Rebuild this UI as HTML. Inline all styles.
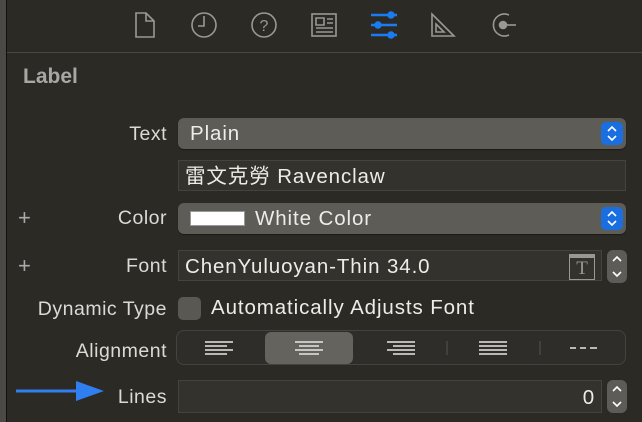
<!DOCTYPE html>
<html><head><meta charset="utf-8"><style>
*{margin:0;padding:0;box-sizing:border-box}
body{width:642px;height:422px;background:#2c2a25;position:relative;overflow:hidden;font-family:"Liberation Sans","Noto Sans CJK TC",sans-serif;color:#e2e0dc}
.abs{position:absolute}
.lbl{position:absolute;right:475px;font-size:19.5px;letter-spacing:0.5px;color:#dcdad6;text-align:right;white-space:nowrap;line-height:24px}
.pop{position:absolute;left:178px;width:448px;height:31px;background:#5e5c57;border-radius:6px;box-shadow:0 1px 1px rgba(0,0,0,.4)}
.pop span,.fld span{position:absolute;left:12px;top:0;line-height:31px;font-size:20.5px;letter-spacing:0.9px;color:#eeece8;white-space:nowrap}
.blue{position:absolute;right:3px;top:4px;width:22px;height:23px;background:#1a6fe0;border-radius:5px}
.fld{position:absolute;left:178px;background:#34322d;border:1px solid #45433e;height:31px}
.fld span{left:6px}
.step{position:absolute;left:607px;width:20px;height:33px;background:#5e5c57;border-radius:6px}
.plus{position:absolute;left:18px;font-size:22px;color:#aaa;font-weight:300}
</style></head><body>
<div class="abs" style="left:0;top:0;width:6px;height:422px;background:#4b4945"></div>
<div class="abs" style="left:6px;top:0;width:1px;height:422px;background:#111"></div>
<div class="abs" style="left:7px;top:52px;width:635px;height:1px;background:#4a4843"></div>
<svg class="abs" style="left:0;top:0" width="642" height="52" fill="none" stroke="#9a9893" stroke-width="1.6">
<path d="M136 13h10l8 8v16h-18z M146 13v8h8"/>
<circle cx="204" cy="25" r="12"/><path d="M204 16v10h-6"/>
<circle cx="264" cy="25" r="12"/><text x="264" y="31" font-size="16" fill="#9a9893" stroke="none" text-anchor="middle" font-family="Liberation Sans">?</text>
<rect x="312" y="14" width="24" height="22"/><path d="M316 18h8v7h-8z M327 19h6 M327 23h6 M316 28h17 M316 32h17"/>
<g stroke="#1a7cf5" stroke-width="2.4"><path d="M371 15h26 M371 25h26 M371 35h26"/><circle cx="391" cy="15" r="2.5" fill="#1a7cf5"/><circle cx="378" cy="25" r="2.5" fill="#1a7cf5"/><circle cx="391" cy="35" r="2.5" fill="#1a7cf5"/></g>
<path d="M432 14v22h22z M436 24v8h8z"/>
<path d="M509 15a11 11 0 1 0 0 20"/><circle cx="503" cy="25" r="3.5" fill="#9a9893"/><path d="M503 25h13"/>
</svg>
<div class="abs" style="left:23px;top:65px;font-size:21px;font-weight:bold;color:#a9a7a3">Label</div>

<div class="lbl" style="top:122px">Text</div>
<div class="pop" style="top:118px"><span>Plain</span><div class="blue"><svg width="22" height="23" fill="none" stroke="#fff" stroke-width="1.6"><path d="M7 9l4-4 4 4 M7 14l4 4 4-4"/></svg></div></div>
<div class="fld" style="top:160px;width:448px"><span>雷文克勞 Ravenclaw</span></div>

<div class="plus" style="top:205px">+</div>
<div class="lbl" style="top:206px">Color</div>
<div class="pop" style="top:203px"><div class="abs" style="left:12px;top:8px;width:55px;height:15px;background:#fff;border:1px solid #999"></div><span style="left:77px">White Color</span><div class="blue"><svg width="22" height="23" fill="none" stroke="#fff" stroke-width="1.6"><path d="M7 9l4-4 4 4 M7 14l4 4 4-4"/></svg></div></div>

<div class="plus" style="top:253px">+</div>
<div class="lbl" style="top:254px">Font</div>
<div class="fld" style="top:250px;width:424px"><span>ChenYuluoyan-Thin 34.0</span>
<div class="abs" style="left:390px;top:3px;width:26px;height:26px;border:1px solid #9a9893;border-top-width:4px;color:#9a9893;font-family:'Liberation Serif';font-size:19px;text-align:center;line-height:22px">T</div></div>
<div class="step" style="top:250px"><svg width="20" height="33" fill="none" stroke="#fff" stroke-width="1.6"><path d="M6 11l4-4 4 4 M6 22l4 4 4-4"/></svg></div>

<div class="lbl" style="top:297px">Dynamic Type</div>
<div class="abs" style="left:178px;top:297px;width:23px;height:23px;background:#5a5853;border-radius:5px"></div>
<div class="abs" style="left:211px;top:296px;font-size:20.5px;letter-spacing:0.9px;color:#eeece8;line-height:24px">Automatically Adjusts Font</div>

<div class="lbl" style="top:339px">Alignment</div>
<div class="abs" style="left:176px;top:330px;width:450px;height:35px;border:1px solid #45433e;border-radius:8px;background:#2f2d29"></div>
<div class="abs" style="left:265px;top:332px;width:88px;height:32px;background:#65635e;border-radius:6px"></div>
<svg class="abs" style="left:0;top:330px" width="642" height="35" stroke="#e8e6e2" stroke-width="1.5">
<path d="M205 12h28 M205 16h22 M205 20h28 M205 24h22"/>
<path d="M295 12h28 M299 16h20 M295 20h28 M299 24h20"/>
<path d="M387 12h28 M393 16h22 M387 20h28 M393 24h22"/>
<path d="M479 12h28 M479 16h28 M479 20h28 M479 24h28"/>
<path d="M570 18h6 M580 18h6 M590 18h7"/>
<path d="M447 11v14 M540 11v14" stroke="#4a4843"/>
</svg>

<svg class="abs" style="left:16px;top:378px" width="90" height="28"><path d="M0 13h62" stroke="#2f7ff0" stroke-width="3"/><path d="M60 3l28 10-28 10z" fill="#2f7ff0"/></svg>
<div class="lbl" style="top:385px">Lines</div>
<div class="fld" style="top:380px;width:424px;height:33px"><span style="left:auto;right:6px;line-height:33px">0</span></div>
<div class="step" style="top:380px"><svg width="20" height="33" fill="none" stroke="#fff" stroke-width="1.6"><path d="M6 11l4-4 4 4 M6 22l4 4 4-4"/></svg></div>
</body></html>
